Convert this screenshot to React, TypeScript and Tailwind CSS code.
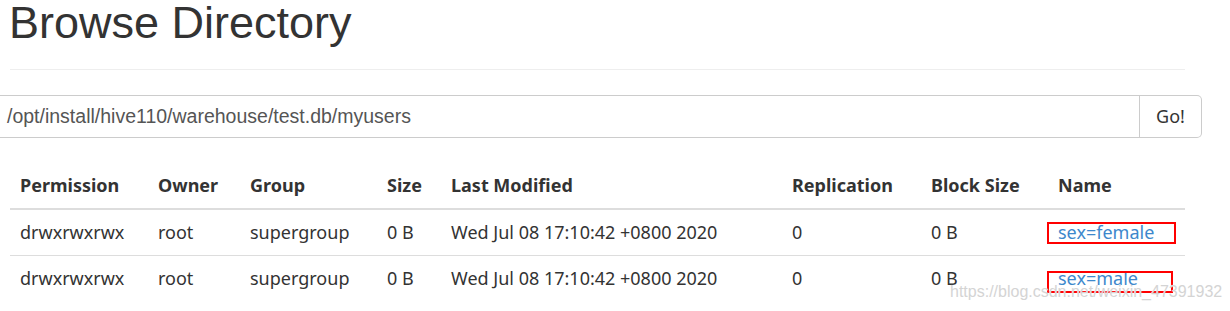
import React from "react";

const cols = [138, 92, 137, 64, 341, 139, 127, 137];
const headers = ["Permission", "Owner", "Group", "Size", "Last Modified", "Replication", "Block Size", "Name"];
const rows = [
  ["drwxrwxrwx", "root", "supergroup", "0 B", "Wed Jul 08 17:10:42 +0800 2020", "0", "0 B", "sex=female"],
  ["drwxrwxrwx", "root", "supergroup", "0 B", "Wed Jul 08 17:10:42 +0800 2020", "0", "0 B", "sex=male"],
];

export default function App() {
  return (
    <div className="relative w-[1230px] h-[311px] overflow-hidden bg-white text-[#333]">
      <div className="pl-[9px] w-[1185px]">
        <h1 className="m-0 -mt-[3px] text-[45px] leading-[52px] font-normal text-[#333] [font-family:'Liberation_Sans',Arial,sans-serif]">
          Browse Directory
        </h1>
        <div className="mt-[20px] ml-px h-px bg-[#eee]" />
      </div>

      <div className="mt-[25px] ml-[-8px] flex w-[1210px] h-[43px]">
        <div className="flex-1 flex items-center border border-[#ccc] pl-[14px] text-[19.5px] text-[#555] [font-family:'Liberation_Sans',Arial,sans-serif]">
          /opt/install/hive110/warehouse/test.db/myusers
        </div>
        <div className="w-[62px] flex items-center justify-center border border-l-0 border-[#ccc] rounded-r-[5px] text-[18px] text-[#333] [font-family:'Noto_Sans',sans-serif]">
          Go!
        </div>
      </div>

      <table className="mt-[25px] ml-[10px] w-[1175px] table-fixed border-collapse text-[18px] [font-family:'Noto_Sans',sans-serif]">
        <colgroup>
          {cols.map((w, i) => (
            <col key={i} style={{ width: w }} />
          ))}
        </colgroup>
        <thead>
          <tr className="h-[46px] border-b-2 border-[#ddd]">
            {headers.map((h) => (
              <th key={h} className="text-left font-bold pl-[10px] align-middle whitespace-nowrap">
                {h}
              </th>
            ))}
          </tr>
        </thead>
        <tbody>
          {rows.map((r, ri) => (
            <tr key={ri} className={ri === 0 ? "h-[46px]" : "h-[47px] border-t border-[#ddd]"}>
              {r.map((c, ci) => (
                <td key={ci} className="pl-[10px] align-middle whitespace-nowrap">
                  {ci === 7 ? <a className="text-[#3d88cc]">{c}</a> : c}
                </td>
              ))}
            </tr>
          ))}
        </tbody>
      </table>

      <div className="absolute left-[1047px] top-[222px] w-[129px] h-[22px] border-2 border-[#f00]" />
      <div className="absolute left-[1047px] top-[271px] w-[126px] h-[22px] border-2 border-[#f00]" />

      <div className="absolute left-[950px] top-[284px] text-[16px] leading-[16px] text-[#d4d4d4] [font-family:'Liberation_Sans',Arial,sans-serif] whitespace-nowrap [text-shadow:0_0_1px_#fff]">
        https://blog.csdn.net/weixin_47391932
      </div>
    </div>
  );
}
